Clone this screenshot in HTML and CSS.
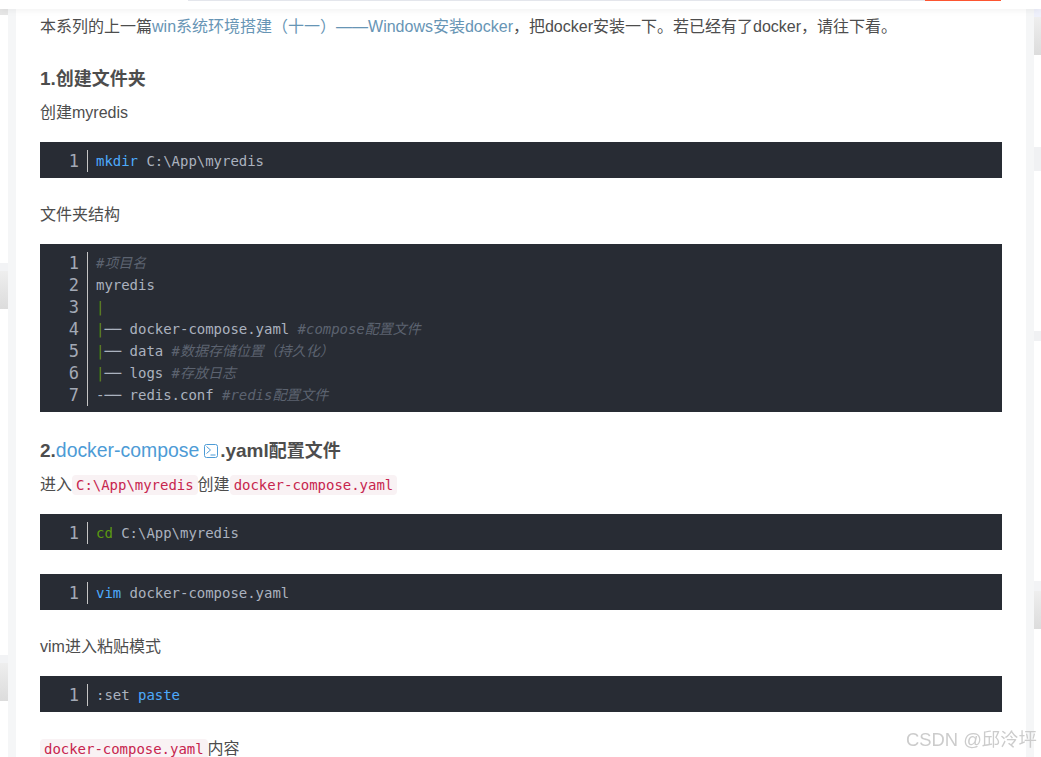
FILE: index.html
```html
<!DOCTYPE html>
<html lang="zh-CN">
<head>
<meta charset="utf-8">
<title>docker redis</title>
<link rel="stylesheet" href="styles.css">
</head>
<body>
<header class="topbar"><div class="topline"></div><div class="topaccent"></div></header>
<div class="page">
  <aside class="rail">
    <div class="blk grey h6"></div>
    <div class="sp h248"></div>
    <div class="blk light h8"></div>
    <div class="blk grad"></div>
    <div class="sp h346"></div>
    <div class="blk light h8"></div>
    <div class="blk grad"></div>
  </aside>
  <main class="content">
    <p class="lead">本系列的上一篇<a class="link" href="#">win系统环境搭建（十一）——Windows安装docker</a>，把docker安装一下。若已经有了docker，请往下看。</p>
    <h3 class="h1st"><span class="lat">1.</span>创建文件夹</h3>
    <p>创建myredis</p>
    <div class="code"><ol class="nums"><li>1</li></ol><pre class="src"><span class="kw">mkdir</span> C:\App\myredis</pre></div>
    <p>文件夹结构</p>
    <div class="code"><ol class="nums"><li>1</li><li>2</li><li>3</li><li>4</li><li>5</li><li>6</li><li>7</li></ol><pre class="src"><span class="cm">#项目名</span>
myredis
<span class="gr">|</span>
<span class="gr">|</span>── docker-compose.yaml <span class="cm">#compose配置文件</span>
<span class="gr">|</span>── data <span class="cm">#数据存储位置（持久化）</span>
<span class="gr">|</span>── logs <span class="cm">#存放日志</span>
-── redis.conf <span class="cm">#redis配置文件</span></pre></div>
    <h3 class="h2nd"><span class="lat">2.</span><a class="hlink" href="#">docker-compose<svg class="term" viewBox="0 0 14 14" aria-hidden="true"><rect x="0.5" y="0.5" width="13" height="13" rx="2" fill="none" stroke="#4d9bd6"/><path d="M2.5 2.5 6.5 6 2.5 9.5M6.5 11H11.5" fill="none" stroke="#4d9bd6"/></svg></a><span class="lat">.yaml</span>配置文件</h3>
    <p>进入<code class="inl">C:\App\myredis</code>创建<code class="inl">docker-compose.yaml</code></p>
    <div class="code"><ol class="nums"><li>1</li></ol><pre class="src"><span class="bi">cd</span> C:\App\myredis</pre></div>
    <div class="code"><ol class="nums"><li>1</li></ol><pre class="src"><span class="kw">vim</span> docker-compose.yaml</pre></div>
    <p>vim进入粘贴模式</p>
    <div class="code"><ol class="nums"><li>1</li></ol><pre class="src">:set <span class="kw">paste</span></pre></div>
    <p><code class="inl">docker-compose.yaml</code>内容</p>
  </main>
  <aside class="rail">
    <div class="blk tint h8"></div>
    <div class="blk grad"></div>
    <div class="sp h92"></div>
    <div class="blk soft h24"></div>
    <div class="sp h160"></div>
    <div class="blk soft h10"></div>
    <div class="sp h240"></div>
    <div class="blk light h10"></div>
    <div class="blk grad"></div>
  </aside>
</div>
<div class="mark">CSDN @邱泠坪</div>
</body>
</html>
```
FILE: styles.css
```css
* { box-sizing: border-box; }
html, body { margin: 0; height: 757px; overflow: hidden; background: #fff; }
body {
  position: relative;
  font-family: "Liberation Sans", "Noto Sans CJK SC", sans-serif;
  font-size: 16px;
  color: #4d4d4d;
}
.topbar {
  position: relative;
  z-index: 2;
  display: flex;
  align-items: flex-start;
  height: 9px;
  padding-left: 188px;
  background: #fff;
  box-shadow: 0 2px 6px rgba(0, 0, 0, .05);
}
.topline { width: 737px; height: 1px; background: #e4e6ec; }
.topaccent { width: 76px; height: 1px; background: #fc5531; }
.page { display: flex; height: 748px; }
.rail { flex: none; width: 8px; }
.rail:last-child { width: 7px; }
.blk { width: 100%; }
.grey { background: #e6e6e6; }
.light { background: #f2f3f5; }
.tint { background: #eef0fb; }
.soft { background: #f0f1f3; }
.grad { height: 38px; background: linear-gradient(#eeeeee, #dcdcdc); }
.h6 { height: 6px; }
.h8 { height: 8px; }
.h10 { height: 10px; }
.h24 { height: 24px; }
.h92 { height: 92px; }
.h160 { height: 160px; }
.h240 { height: 240px; }
.h248 { height: 248px; }
.h346 { height: 346px; }
.content {
  flex: 1;
  min-width: 0;
  padding: 5px 24px 0;
  background: #fff;
  border-left: 8px solid #f5f6f7;
  border-right: 8px solid #f5f6f7;
}
p { margin: 0 0 16px; line-height: 26px; }
.content > p.lead { margin-bottom: 25px; }
h3 { margin: 0 0 7px; font-size: 18px; line-height: 28px; font-weight: 700; }
.h2nd { margin-top: 1px; }
.lat { font-size: 19px; }
.link { color: #6795b5; text-decoration: none; }
.hlink { color: #4d9bd6; font-weight: 400; font-size: 19.4px; text-decoration: none; }
.term { width: 14px; height: 14px; margin: 0 2px 0 5px; vertical-align: -1px; }
.code {
  display: flex;
  margin-bottom: 24px;
  padding: 8px 0 6px;
  background: #282c34;
  font-family: "DejaVu Sans Mono", "Noto Sans CJK SC", monospace;
}
.nums {
  flex: none;
  width: 48px;
  margin: 0;
  padding: 0 8px 0 0;
  list-style: none;
  text-align: right;
  font-size: 17px;
  line-height: 22px;
  color: #a3a9b5;
  border-right: 1px solid #c5c5c5;
}
.src {
  margin: 0;
  padding-left: 8px;
  font: inherit;
  font-size: 14px;
  line-height: 22px;
  letter-spacing: -.03px;
  color: #abb2bf;
}
.kw { color: #4daafc; }
.bi { color: #5c9a10; }
.gr { color: #5f8c1a; }
.cm { color: #5c6370; font-style: italic; }
.inl {
  padding: 2px 4px;
  border-radius: 4px;
  background: #f9f2f4;
  color: #c7254e;
  font-family: "DejaVu Sans Mono", monospace;
  font-size: 14px;
  letter-spacing: -.03px;
}
.mark {
  position: absolute;
  z-index: 3;
  right: 4px;
  bottom: 6px;
  font-size: 18.4px;
  line-height: 22px;
  color: #ccc;
  filter: blur(.5px);
  white-space: nowrap;
}
```
